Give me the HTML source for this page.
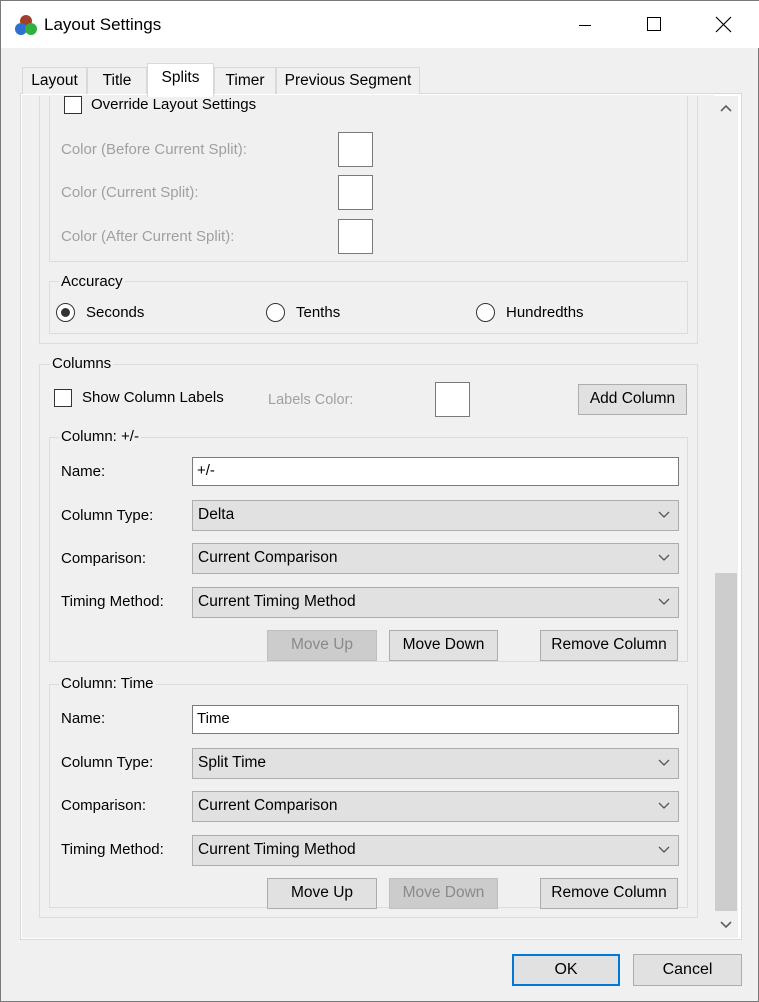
<!DOCTYPE html>
<html><head><meta charset="utf-8"><style>
*{box-sizing:border-box;margin:0;padding:0}
body{width:759px;height:1002px;background:#f0f0f0;font-family:"Liberation Sans",sans-serif;font-size:15px;color:#000;position:relative;overflow:hidden;border:1px solid #7a7a7a}
.a{position:absolute}
.t{position:absolute;white-space:nowrap;line-height:18px}
.g{color:#a0a0a0}
.grp{position:absolute;border:1px solid #dcdcdc}
.sw{position:absolute;width:35px;height:35px;background:#fff;border:1px solid #7a7a7a}
.btn{position:absolute;background:#e1e1e1;border:1px solid #adadad;text-align:center;line-height:28px;font-size:15.5px}
.dis{background:#cccccc;border-color:#bfbfbf;color:#8a8a8a}
.cb{position:absolute;background:#e1e1e1;border:1px solid #adadad;padding-left:5px;line-height:28px;font-size:15.5px}
.cb svg{position:absolute;right:8px;top:10px}
.tb{position:absolute;background:#fff;border:1px solid #7a7a7a;padding-left:4px;line-height:26px;font-size:15px}
.chk{position:absolute;width:18px;height:18px;border:1px solid #333;background:#fff}
.rad{position:absolute;width:19px;height:19px;border:1px solid #333;border-radius:50%;background:#fff}
.tab{position:absolute;top:66px;height:27px;border:1px solid #d9d9d9;border-bottom:none;background:#f0f0f0;text-align:center;line-height:26px;font-size:15.5px}
</style></head><body>
<div class="a" style="left:0;top:0;width:759px;height:47px;background:#fff"></div>
<svg class="a" style="left:14px;top:13px" width="22" height="22" viewBox="0 0 22 22"><circle cx="11" cy="7" r="6" fill="#a0402a"/><circle cx="6" cy="15" r="6" fill="#2f6fd0"/><circle cx="16" cy="15" r="6" fill="#30b040"/></svg>
<div class="t" style="left:43px;top:14px;font-size:17px;line-height:20px">Layout Settings</div>
<div class="a" style="left:578px;top:24px;width:12px;height:1px;background:#000"></div>
<div class="a" style="left:646px;top:16px;width:14px;height:14px;border:1px solid #000"></div>
<svg class="a" style="left:714px;top:15px" width="17" height="17"><path d="M1 1L16 16M16 1L1 16" stroke="#000" stroke-width="1.2"/></svg>

<div class="a" style="left:19px;top:92px;width:722px;height:847px;background:#fff;border:1px solid #d9d9d9"></div>
<div class="a" style="left:21px;top:94px;width:692px;height:843px;background:#f0f0f0"></div>
<div class="tab" style="left:21px;width:65px">Layout</div>
<div class="tab" style="left:86px;width:60px">Title</div>
<div class="tab" style="left:213px;width:62px">Timer</div>
<div class="tab" style="left:275px;width:144px">Previous Segment</div>
<div class="tab" style="left:146px;top:62px;height:34px;width:67px;background:#fff;line-height:28px">Splits</div>

<div class="a" style="left:713px;top:95px;width:24px;height:842px;background:#f0f0f0"></div>
<div class="a" style="left:714px;top:572px;width:22px;height:338px;background:#cdcdcd"></div>
<svg class="a" style="left:719px;top:103px" width="12" height="8"><path d="M1 7L6 2L11 7" stroke="#606060" stroke-width="1.6" fill="none"/></svg>
<svg class="a" style="left:719px;top:920px" width="12" height="8"><path d="M1 1L6 6L11 1" stroke="#606060" stroke-width="1.6" fill="none"/></svg>

<div class="grp" style="left:38px;top:95px;width:659px;height:248px;border-top:none"></div>
<div class="grp" style="left:48px;top:95px;width:639px;height:166px;border-top:none"></div>
<div class="chk" style="left:63px;top:95px"></div>
<div class="t" style="left:90px;top:95px">Override Layout Settings</div>
<div class="t g" style="left:60px;top:140px">Color (Before Current Split):</div>
<div class="t g" style="left:60px;top:183px">Color (Current Split):</div>
<div class="t g" style="left:60px;top:227px">Color (After Current Split):</div>
<div class="sw" style="left:337px;top:131px"></div>
<div class="sw" style="left:337px;top:174px"></div>
<div class="sw" style="left:337px;top:218px"></div>

<div class="grp" style="left:48px;top:280px;width:639px;height:53px"></div>
<div class="t" style="left:58px;top:272px;background:#f0f0f0;padding:0 2px">Accuracy</div>
<div class="rad" style="left:55px;top:302px"><div class="a" style="left:4px;top:4px;width:9px;height:9px;border-radius:50%;background:#333"></div></div>
<div class="t" style="left:85px;top:303px">Seconds</div>
<div class="rad" style="left:265px;top:302px"></div>
<div class="t" style="left:295px;top:303px">Tenths</div>
<div class="rad" style="left:475px;top:302px"></div>
<div class="t" style="left:505px;top:303px">Hundredths</div>

<div class="grp" style="left:38px;top:363px;width:659px;height:554px"></div>
<div class="t" style="left:49px;top:354px;background:#f0f0f0;padding:0 2px">Columns</div>
<div class="chk" style="left:53px;top:388px"></div>
<div class="t" style="left:81px;top:388px">Show Column Labels</div>
<div class="t g" style="left:267px;top:390px;font-size:14.5px">Labels Color:</div>
<div class="sw" style="left:434px;top:381px"></div>
<div class="btn" style="left:577px;top:383px;width:109px;height:31px">Add Column</div>

<div class="grp" style="left:48px;top:436px;width:639px;height:225px"></div>
<div class="t" style="left:58px;top:427px;background:#f0f0f0;padding:0 2px">Column: +/-</div>
<div class="t" style="left:60px;top:462px">Name:</div>
<div class="tb" style="left:191px;top:456px;width:487px;height:29px">+/-</div>
<div class="t" style="left:60px;top:506px">Column Type:</div>
<div class="cb" style="left:191px;top:499px;width:487px;height:31px">Delta<svg width="12" height="8"><path d="M1 1L6 6L11 1" stroke="#555" stroke-width="1.3" fill="none"/></svg></div>
<div class="t" style="left:60px;top:549px">Comparison:</div>
<div class="cb" style="left:191px;top:542px;width:487px;height:31px">Current Comparison<svg width="12" height="8"><path d="M1 1L6 6L11 1" stroke="#555" stroke-width="1.3" fill="none"/></svg></div>
<div class="t" style="left:60px;top:592px">Timing Method:</div>
<div class="cb" style="left:191px;top:586px;width:487px;height:31px">Current Timing Method<svg width="12" height="8"><path d="M1 1L6 6L11 1" stroke="#555" stroke-width="1.3" fill="none"/></svg></div>
<div class="btn dis" style="left:266px;top:629px;width:110px;height:31px">Move Up</div>
<div class="btn" style="left:388px;top:629px;width:109px;height:31px">Move Down</div>
<div class="btn" style="left:539px;top:629px;width:138px;height:31px">Remove Column</div>

<div class="grp" style="left:48px;top:683px;width:639px;height:224px"></div>
<div class="t" style="left:58px;top:674px;background:#f0f0f0;padding:0 2px">Column: Time</div>
<div class="t" style="left:60px;top:709px">Name:</div>
<div class="tb" style="left:191px;top:704px;width:487px;height:29px">Time</div>
<div class="t" style="left:60px;top:753px">Column Type:</div>
<div class="cb" style="left:191px;top:747px;width:487px;height:31px">Split Time<svg width="12" height="8"><path d="M1 1L6 6L11 1" stroke="#555" stroke-width="1.3" fill="none"/></svg></div>
<div class="t" style="left:60px;top:796px">Comparison:</div>
<div class="cb" style="left:191px;top:790px;width:487px;height:31px">Current Comparison<svg width="12" height="8"><path d="M1 1L6 6L11 1" stroke="#555" stroke-width="1.3" fill="none"/></svg></div>
<div class="t" style="left:60px;top:840px">Timing Method:</div>
<div class="cb" style="left:191px;top:834px;width:487px;height:31px">Current Timing Method<svg width="12" height="8"><path d="M1 1L6 6L11 1" stroke="#555" stroke-width="1.3" fill="none"/></svg></div>
<div class="btn" style="left:266px;top:877px;width:110px;height:31px">Move Up</div>
<div class="btn dis" style="left:388px;top:877px;width:109px;height:31px">Move Down</div>
<div class="btn" style="left:539px;top:877px;width:138px;height:31px">Remove Column</div>

<div class="btn" style="left:511px;top:953px;width:108px;height:32px;border:2px solid #0078d7;line-height:28px;font-size:16px">OK</div>
<div class="btn" style="left:632px;top:953px;width:109px;height:32px;line-height:30px;font-size:16px">Cancel</div>
</body></html>
